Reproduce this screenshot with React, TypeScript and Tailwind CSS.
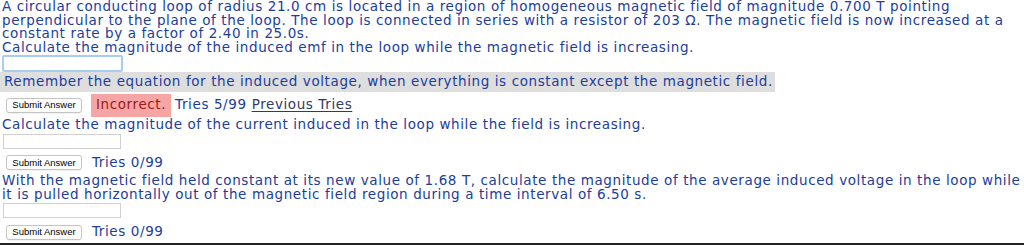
export default function App() {
  const submitBtn = (
    <button
      type="button"
      className="ml-[6px] h-[15px] w-[76px] shrink-0 rounded-[3px] border border-[#c4c4c4] bg-white text-[9.5px] leading-none tracking-normal text-black shadow-[0_1px_0_rgba(0,0,0,0.05)]"
      style={{ fontFamily: '"Liberation Sans", Arial, sans-serif' }}
    >
      Submit Answer
    </button>
  );

  return (
    <div
      className="w-[1024px] bg-white text-[13.5px] leading-[13.5px] tracking-[0.6px] text-[#1c3d9c]"
      style={{ fontFamily: '"DejaVu Sans", Verdana, sans-serif' }}
    >
      <p className="whitespace-nowrap pl-[2px]">
        A circular conducting loop of radius 21.0 cm is located in a region of homogeneous magnetic field of magnitude 0.700 T pointing
        <br />
        perpendicular to the plane of the loop. The loop is connected in series with a resistor of 203 Ω. The magnetic field is now increased at a
        <br />
        constant rate by a factor of 2.40 in 25.0s.
        <br />
        Calculate the magnitude of the induced emf in the loop while the magnetic field is increasing.
      </p>
      <div className="ml-[2px] mt-px h-[17px] w-[121px] rounded-[2px] border-2 border-[#a9cdf2] bg-white" />

      <div className="w-[775px] bg-[#dedede] py-[3.25px] pl-[4px]">
        Remember the equation for the induced voltage, when everything is constant except the magnetic field.
      </div>

      <div className="flex h-[26px] items-center">
        {submitBtn}
        <span className="ml-[9px] flex h-[23px] items-center bg-[#f6a5a5] px-[5px] text-[#9d1818]">Incorrect.</span>
        <span className="ml-[4px]">Tries 5/99</span>
        <span className="ml-[5px] text-[#2f3b66] underline decoration-1 underline-offset-2">Previous Tries</span>
      </div>

      <p className="pl-[2px]">Calculate the magnitude of the current induced in the loop while the field is increasing.</p>
      <div className="ml-[3px] mt-[2px] h-[15px] w-[118px] border border-[#d0d0d0] bg-white" />

      <div className="mt-[4px] flex h-[20px] items-center">
        {submitBtn}
        <span className="ml-[10px]">Tries 0/99</span>
      </div>

      <p className="mt-[1.5px] whitespace-nowrap pl-[2px]">
        With the magnetic field held constant at its new value of 1.68 T, calculate the magnitude of the average induced voltage in the loop while
        <br />
        it is pulled horizontally out of the magnetic field region during a time interval of 6.50 s.
      </p>
      <div className="ml-[3px] mt-[2px] h-[15px] w-[118px] border border-[#d0d0d0] bg-white" />

      <div className="mt-[4px] flex h-[20px] items-center">
        {submitBtn}
        <span className="ml-[10px]">Tries 0/99</span>
      </div>

      <div className="mt-px h-[2px] bg-[#222]" />
    </div>
  );
}
